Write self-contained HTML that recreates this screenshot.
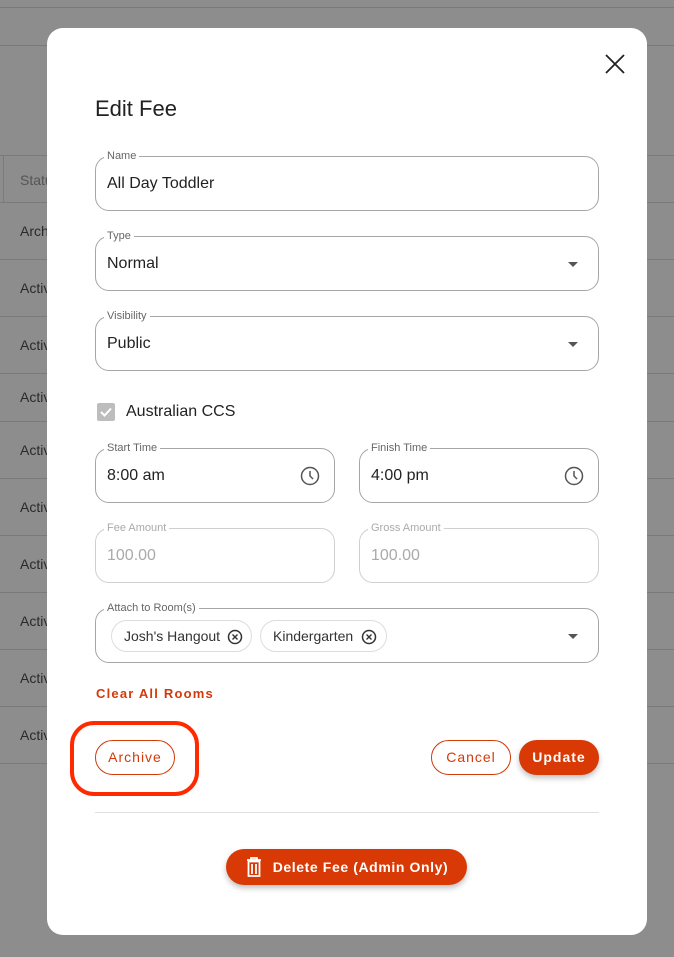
<!DOCTYPE html>
<html><head><meta charset="utf-8"><style>
*{box-sizing:border-box;margin:0;padding:0}
body{width:674px;height:957px;background:#8d8d8d;font-family:"Liberation Sans",sans-serif;position:relative;overflow:hidden}
.a{position:absolute}
.hl{position:absolute;left:0;right:0;height:1px;background:#7a7a7a}
.bgt{position:absolute;left:20px;font-size:14px;color:#2a2a2a}
.modal{position:absolute;left:47px;top:28px;width:600px;height:907px;background:#fff;border-radius:16px}
.f{position:absolute;border:1px solid #a6a6a6;border-radius:14px}
.lb{position:absolute;top:-8px;left:8px;padding:0 3px;background:#fff;font-size:11px;color:#666;line-height:14px}
.v{position:absolute;left:11px;top:18px;font-size:16px;color:#222}
.dis{border-color:#cfcfcf}.dis .lb,.dis .v{color:#aaa}
.arr{position:absolute;right:20px;top:25px;width:0;height:0;border-left:5px solid transparent;border-right:5px solid transparent;border-top:5px solid #555}
.chip{position:absolute;top:11px;height:32px;border:1px solid #ddd;border-radius:16px;font-size:14px;color:#333;padding:7px 0 0 12px}
.btn{position:absolute;height:35px;border-radius:18px;font-size:14px;font-weight:bold;letter-spacing:1px;text-align:center;line-height:35px}
.o{border:1px solid #d33a0a;color:#d33a0a;background:#fff;font-weight:normal;line-height:33px}
.s{background:#d93a05;color:#fff;box-shadow:0 3px 6px rgba(0,0,0,.25)}
</style></head><body>
<div class="hl" style="top:7px"></div>
<div class="hl" style="top:45px"></div>
<div class="hl" style="top:155px"></div>
<div class="hl" style="top:202px"></div>
<div class="a" style="left:3px;top:155px;width:1px;height:48px;background:#7a7a7a"></div>
<div class="bgt" style="top:172px;color:#555">Status</div>
<div class="bgt" style="top:223px">Archived</div>
<div class="hl" style="top:259px"></div><div class="bgt" style="top:280px">Active</div>
<div class="hl" style="top:316px"></div><div class="bgt" style="top:337px">Active</div>
<div class="hl" style="top:373px"></div><div class="bgt" style="top:389px">Active</div>
<div class="hl" style="top:421px"></div><div class="bgt" style="top:442px">Active</div>
<div class="hl" style="top:478px"></div><div class="bgt" style="top:499px">Active</div>
<div class="hl" style="top:535px"></div><div class="bgt" style="top:556px">Active</div>
<div class="hl" style="top:592px"></div><div class="bgt" style="top:613px">Active</div>
<div class="hl" style="top:649px"></div><div class="bgt" style="top:670px">Active</div>
<div class="hl" style="top:706px"></div><div class="bgt" style="top:727px">Active</div>
<div class="hl" style="top:763px"></div>

<div class="modal"></div>
<svg class="a" style="left:604px;top:53px" width="22" height="22"><path d="M2 2L20 20M20 2L2 20" stroke="#222" stroke-width="1.8"/></svg>
<div class="a" style="left:95px;top:96px;font-size:22px;color:#222">Edit Fee</div>

<div class="f" style="left:95px;top:156px;width:504px;height:55px"><span class="lb">Name</span><span class="v">All Day Toddler</span></div>
<div class="f" style="left:95px;top:236px;width:504px;height:55px"><span class="lb">Type</span><span class="v">Normal</span><span class="arr"></span></div>
<div class="f" style="left:95px;top:316px;width:504px;height:55px"><span class="lb">Visibility</span><span class="v">Public</span><span class="arr"></span></div>

<div class="a" style="left:97px;top:403px;width:18px;height:18px;background:#bdbdbd;border-radius:2px"><svg width="18" height="18"><path d="M4 9l3.5 3.5L14 5.5" stroke="#fff" stroke-width="2" fill="none"/></svg></div>
<div class="a" style="left:126px;top:403px;font-size:16px;color:#222">Australian CCS</div>

<div class="f" style="left:95px;top:448px;width:240px;height:55px"><span class="lb">Start Time</span><span class="v">8:00 am</span>
<svg class="a" style="left:204px;top:17px" width="20" height="20"><circle cx="10" cy="10" r="8.5" stroke="#555" stroke-width="1.5" fill="none"/><path d="M10 5v5l3 3" stroke="#555" stroke-width="1.5" fill="none"/></svg></div>
<div class="f" style="left:359px;top:448px;width:240px;height:55px"><span class="lb">Finish Time</span><span class="v">4:00 pm</span>
<svg class="a" style="left:204px;top:17px" width="20" height="20"><circle cx="10" cy="10" r="8.5" stroke="#555" stroke-width="1.5" fill="none"/><path d="M10 5v5l3 3" stroke="#555" stroke-width="1.5" fill="none"/></svg></div>
<div class="f dis" style="left:95px;top:528px;width:240px;height:55px"><span class="lb">Fee Amount</span><span class="v">100.00</span></div>
<div class="f dis" style="left:359px;top:528px;width:240px;height:55px"><span class="lb">Gross Amount</span><span class="v">100.00</span></div>

<div class="f" style="left:95px;top:608px;width:504px;height:55px"><span class="lb">Attach to Room(s)</span>
<div class="chip" style="left:15px;width:141px">Josh's Hangout</div>
<svg class="a" style="left:131px;top:20px" width="16" height="16"><circle cx="8" cy="8" r="6.5" stroke="#333" stroke-width="1.5" fill="none"/><path d="M5.5 5.5l5 5M10.5 5.5l-5 5" stroke="#333" stroke-width="1.4"/></svg>
<div class="chip" style="left:164px;width:127px">Kindergarten</div>
<svg class="a" style="left:265px;top:20px" width="16" height="16"><circle cx="8" cy="8" r="6.5" stroke="#333" stroke-width="1.5" fill="none"/><path d="M5.5 5.5l5 5M10.5 5.5l-5 5" stroke="#333" stroke-width="1.4"/></svg>
<span class="arr"></span></div>

<div class="a" style="left:96px;top:686px;font-size:13px;font-weight:bold;color:#d33a0a;letter-spacing:1.2px">Clear All Rooms</div>

<div class="btn o" style="left:95px;top:740px;width:80px">Archive</div>
<div class="a" style="left:70px;top:721px;width:129px;height:75px;border:4px solid #ff2a00;border-radius:24px"></div>
<div class="btn o" style="left:431px;top:740px;width:80px">Cancel</div>
<div class="btn s" style="left:519px;top:740px;width:80px">Update</div>
<div class="a" style="left:95px;top:812px;width:504px;height:1px;background:#e0e0e0"></div>
<div class="btn s" style="left:226px;top:849px;width:241px;height:36px;line-height:36px;padding-left:28px;letter-spacing:0.6px">Delete Fee (Admin Only)</div>
<svg class="a" style="left:245px;top:857px" width="18" height="20"><path d="M2 3h14M6 3V1h6v2M3.5 4.5h11V19h-11z M7 7v10M11 7v10" stroke="#fff" stroke-width="1.8" fill="none"/></svg>
</body></html>
